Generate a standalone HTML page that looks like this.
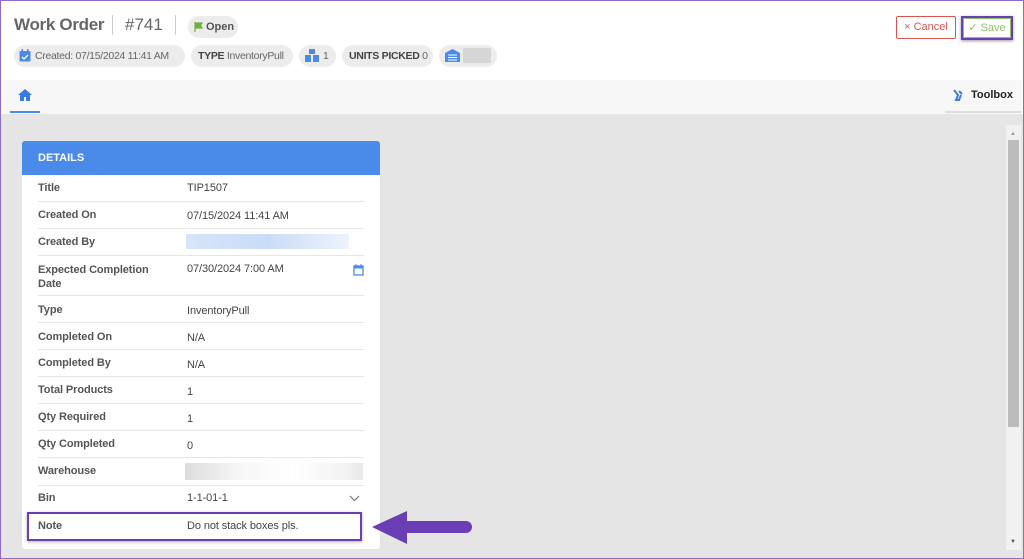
<!DOCTYPE html>
<html><head><style>
*{box-sizing:border-box;margin:0;padding:0}
body{width:1024px;height:559px;overflow:hidden;font-family:"Liberation Sans",sans-serif;background:#fff;position:relative}
.a{position:absolute}
.frame{left:0;top:0;width:1024px;height:559px;border:1px solid #8c6cc8;pointer-events:none;z-index:9}
.chip{position:absolute;height:22px;top:45px;border-radius:11px;background:#ececec;font-size:10.5px;letter-spacing:-0.3px;color:#666;line-height:22px;padding-left:7px;white-space:nowrap}
.chip b{color:#444}
.lbl{position:absolute;left:38px;font-size:11px;font-weight:bold;color:#555;letter-spacing:-0.1px}
.val{position:absolute;left:187px;font-size:11px;color:#444;letter-spacing:-0.1px}
.sep{position:absolute;left:38px;width:326px;height:1px;background:#e6e6e6}
</style></head><body>
<div class="a" style="left:14px;top:15px;font-size:17px;font-weight:bold;color:#666;letter-spacing:-0.3px">Work Order</div>
<div class="a" style="left:112px;top:15px;width:1px;height:20px;background:#ccc"></div>
<div class="a" style="left:125px;top:15px;font-size:17px;color:#666">#741</div>
<div class="a" style="left:175px;top:15px;width:1px;height:20px;background:#ccc"></div>
<div class="a" style="left:188px;top:16px;width:50px;height:22px;border-radius:11px;background:#ececec;font-size:11px;font-weight:bold;color:#555;line-height:22px;padding-left:18px">Open</div>
<svg class="a" style="left:194px;top:22px" width="9" height="10"><path d="M1 0v10M1 1h7l-1.5 2.5L8 6H1" fill="#6fae3a" stroke="#6fae3a" stroke-width="1.2"/></svg>

<div class="chip" style="left:14px;width:171px;padding-left:21px">Created: 07/15/2024 11:41 AM</div>
<svg class="a" style="left:19px;top:49px" width="12" height="13"><rect x="0.5" y="2" width="11" height="10.5" rx="1" fill="#4a8ae8"/><rect x="2.5" y="0" width="1.5" height="3" fill="#4a8ae8"/><rect x="8" y="0" width="1.5" height="3" fill="#4a8ae8"/><path d="M3 8l2 2 4-4" stroke="#fff" stroke-width="1.3" fill="none"/></svg>
<div class="chip" style="left:191px;width:102px"><b>TYPE</b> InventoryPull</div>
<div class="chip" style="left:299px;width:37px;padding-left:24px">1</div>
<svg class="a" style="left:305px;top:49px" width="14" height="13"><path d="M4 0h6v5H4zM0 6h6v7H0zM8 6h6v7H8z" fill="#4a8ae8"/></svg>
<div class="chip" style="left:342px;width:91px"><b>UNITS PICKED</b> 0</div>
<div class="chip" style="left:439px;width:58px"></div>
<svg class="a" style="left:445px;top:49px" width="15" height="13"><path d="M0 4L7.5 0 15 4v9H0z" fill="#4a8ae8"/><path d="M3 6h9M3 8.5h9M3 11h9" stroke="#fff" stroke-width="1"/></svg>
<div class="a" style="left:463px;top:48px;width:28px;height:15px;background:#d6d6d6"></div>

<div class="a" style="left:896px;top:16px;width:60px;height:23px;border:1.5px solid #d9534f;border-radius:2px;color:#d9534f;font-size:11px;line-height:20px;text-align:center">× Cancel</div>
<div class="a" style="left:961px;top:16px;width:52px;height:24px;border:2px solid #6a3fb5;box-shadow:0 1px 3px rgba(0,0,0,.4)"></div>
<div class="a" style="left:963px;top:18px;width:48px;height:20px;border:1px solid #8cc36a;color:#8cc36a;font-size:11px;line-height:18px;text-align:center">✓ Save</div>

<div class="a" style="left:0;top:80px;width:1024px;height:34px;background:#f7f7f7"></div>
<svg class="a" style="left:18px;top:89px" width="14" height="12"><path d="M7 0L0 6h2v6h4V8h2v4h4V6h2z" fill="#3a7be0"/></svg>
<div class="a" style="left:10px;top:111px;width:30px;height:2px;background:#4a8ae8"></div>
<svg class="a" style="left:952px;top:89px" width="12" height="13"><path d="M2 1l4 5-2 5h3l2-5M7 2l3 3" stroke="#3a7be0" stroke-width="2" fill="none"/></svg>
<div class="a" style="left:971px;top:89px;font-size:11px;font-weight:bold;color:#222">Toolbox</div>
<div class="a" style="left:945px;top:111px;width:76px;height:2px;background:#ddd"></div>

<div class="a" style="left:0;top:114px;width:1024px;height:445px;background:#e5e5e5"></div>
<div class="a" style="left:1006px;top:125px;width:15px;height:425px;background:#f1f1f1"></div>
<div class="a" style="left:1008px;top:140px;width:11px;height:287px;background:#bcbcbc"></div>
<div class="a" style="left:1010px;top:131px;font-size:6px;color:#999">▲</div>
<div class="a" style="left:1010px;top:539px;font-size:6px;color:#555">▼</div>

<div class="a" style="left:22px;top:141px;width:358px;height:408px;background:#fff;border-radius:3px"></div>
<div class="a" style="left:22px;top:141px;width:358px;height:34px;background:#4a8ae8;border-radius:3px 3px 0 0;color:#fff;font-size:11px;font-weight:bold;line-height:34px;padding-left:16px">DETAILS</div>

<div class="lbl" style="top:182px">Title</div><div class="val" style="top:182px">TIP1507</div>
<div class="sep" style="top:201px"></div>
<div class="lbl" style="top:209px">Created On</div><div class="val" style="top:210px">07/15/2024 11:41 AM</div>
<div class="sep" style="top:228px"></div>
<div class="lbl" style="top:236px">Created By</div>
<div class="a" style="left:186px;top:234px;width:163px;height:15px;background:linear-gradient(90deg,#d7e4f8,#c9dcf7 50%,#eef3fc)"></div>
<div class="sep" style="top:255px"></div>
<div class="lbl" style="top:263px;line-height:14px">Expected Completion<br>Date</div><div class="val" style="top:263px">07/30/2024 7:00 AM</div>
<svg class="a" style="left:353px;top:264px" width="11" height="12"><rect x="1" y="2" width="9" height="9" fill="none" stroke="#4a8ae8" stroke-width="1.3"/><rect x="1" y="2" width="9" height="2.5" fill="#4a8ae8"/><path d="M3 0v3M8 0v3" stroke="#4a8ae8"/></svg>
<div class="sep" style="top:295px"></div>
<div class="lbl" style="top:304px">Type</div><div class="val" style="top:305px">InventoryPull</div>
<div class="sep" style="top:322px"></div>
<div class="lbl" style="top:331px">Completed On</div><div class="val" style="top:332px">N/A</div>
<div class="sep" style="top:349px"></div>
<div class="lbl" style="top:357px">Completed By</div><div class="val" style="top:359px">N/A</div>
<div class="sep" style="top:376px"></div>
<div class="lbl" style="top:384px">Total Products</div><div class="val" style="top:386px">1</div>
<div class="sep" style="top:403px"></div>
<div class="lbl" style="top:411px">Qty Required</div><div class="val" style="top:413px">1</div>
<div class="sep" style="top:430px"></div>
<div class="lbl" style="top:438px">Qty Completed</div><div class="val" style="top:440px">0</div>
<div class="sep" style="top:457px"></div>
<div class="lbl" style="top:465px">Warehouse</div>
<div class="a" style="left:185px;top:463px;width:178px;height:17px;background:linear-gradient(90deg,#dcdcdc,#f6f6f6 30%,#fff 60%,#f3f3f3 90%,#e8e8e8)"></div>
<div class="sep" style="top:485px"></div>
<div class="lbl" style="top:492px">Bin</div><div class="val" style="top:492px">1-1-01-1</div>
<svg class="a" style="left:349px;top:495px" width="11" height="7"><path d="M1 1l4.5 4.5L10 1" stroke="#777" fill="none" stroke-width="1.2"/></svg>
<div class="a" style="left:27px;top:512px;width:335px;height:29px;border:2px solid #6a3fb5;box-shadow:0 1px 3px rgba(0,0,0,.3)"></div>
<div class="lbl" style="top:520px">Note</div><div class="val" style="top:520px">Do not stack boxes pls.</div>

<svg class="a" style="left:370px;top:508px" width="105" height="40"><path d="M2 19L37 3v10h59a6 6 0 0 1 0 12H37v11z" fill="#6a3fb5"/></svg>
<div class="a frame"></div>
</body></html>
